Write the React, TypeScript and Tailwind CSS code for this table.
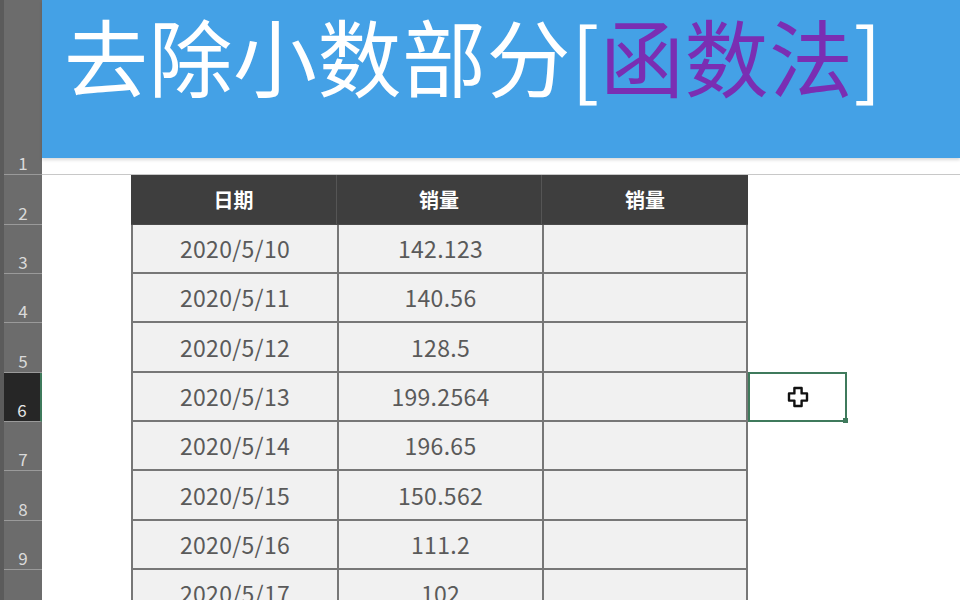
import { Fragment } from "react";

// row heights (px) incl. bottom border, matching the sheet grid
const rowHeights = [175, 50, 49, 49, 50, 49, 49, 50, 49, 49];

const rows = [
  ["2020/5/10", "142.123"],
  ["2020/5/11", "140.56"],
  ["2020/5/12", "128.5"],
  ["2020/5/13", "199.2564"],
  ["2020/5/14", "196.65"],
  ["2020/5/15", "150.562"],
  ["2020/5/16", "111.2"],
  ["2020/5/17", "102"],
];

function CrossCursor() {
  return (
    <svg width="24" height="24" viewBox="0 0 20 20">
      <path
        d="M7 2.5h6v4.5h4.5v6H13v4.5H7V13H2.5V7H7z"
        fill="#fff"
        stroke="#111"
        strokeWidth="2"
        strokeLinejoin="round"
      />
    </svg>
  );
}

export default function App() {
  return (
    <div className="flex w-[960px] h-[600px] overflow-hidden bg-white font-['Noto_Sans_CJK_SC',sans-serif]">
      {/* row headers */}
      <div className="w-[42px] shrink-0 flex flex-col bg-[#6c6c6c] border-l-[4px] border-[#5b5b5b]">
        {rowHeights.map((h, i) => (
          <div
            key={i}
            style={{ height: h }}
            className={
              "shrink-0 flex items-end justify-center pb-[3px] border-b border-[#9a9a9a] text-[17px] leading-none " +
              (i === 5 ? "bg-[#262626] text-[#e5e5e5] border-r-2 border-r-[#3f7a5c]" : "text-[#dadada]")
            }
          >
            <span>{i + 1}</span>
          </div>
        ))}
      </div>

      <div className="flex-1 flex flex-col">
        {/* title row */}
        <div className="h-[175px] shrink-0 border-b border-[#c8c8c8]">
          <div className="h-[158px] bg-[#44a1e6] shadow-[0_2px_3px_rgba(0,0,0,0.15)] pl-[22px] pt-[5px]">
            <h1 className="text-[84px] leading-[1.2] text-white font-normal tracking-[0.5px] whitespace-nowrap">
              去除小数部分[<span className="text-[#7a2eb3]">函数法</span>]
            </h1>
          </div>
        </div>

        {/* table area */}
        <div className="flex">
          <div className="w-[89px] shrink-0" />
          <div className="w-[617px] shrink-0 flex flex-col">
            <div
              style={{ height: rowHeights[1] }}
              className="grid grid-cols-[206px_205px_206px] bg-[#3e3e3e] border-b border-[#4a4a4a] text-white font-bold text-[20px]"
            >
              {["日期", "销量", "销量"].map((t, i) => (
                <div
                  key={i}
                  className={"flex items-center justify-center " + (i < 2 ? "border-r border-[#555]" : "")}
                >
                  {t}
                </div>
              ))}
            </div>
            {rows.map((r, ri) => (
              <div
                key={ri}
                style={{ height: rowHeights[ri + 2] ?? 49 }}
                className="shrink-0 grid grid-cols-[206px_205px_206px] bg-[#f1f1f1] border-b-2 border-[#777] border-l-2 border-r-2 text-[23px] tracking-[0.3px] text-[#5a5a5a]"
              >
                {[r[0], r[1], ""].map((t, i) => (
                  <Fragment key={i}>
                    <div
                      className={
                        "flex items-center justify-center " + (i < 2 ? "border-r-2 border-[#777]" : "")
                      }
                    >
                      {t}
                    </div>
                  </Fragment>
                ))}
              </div>
            ))}
          </div>

          {/* selected cell column */}
          <div className="w-[99px] shrink-0 flex flex-col">
            <div style={{ height: rowHeights[1] + rowHeights[2] + rowHeights[3] + rowHeights[4] }} />
            <div
              style={{ height: rowHeights[5] + 1 }}
              className="relative -mt-[1px] border-2 border-[#3f7a5c] flex items-center justify-center"
            >
              <CrossCursor />
              <div className="absolute -right-[3px] -bottom-[3px] w-[5px] h-[5px] bg-[#3f7a5c]" />
            </div>
          </div>
        </div>
      </div>
    </div>
  );
}
